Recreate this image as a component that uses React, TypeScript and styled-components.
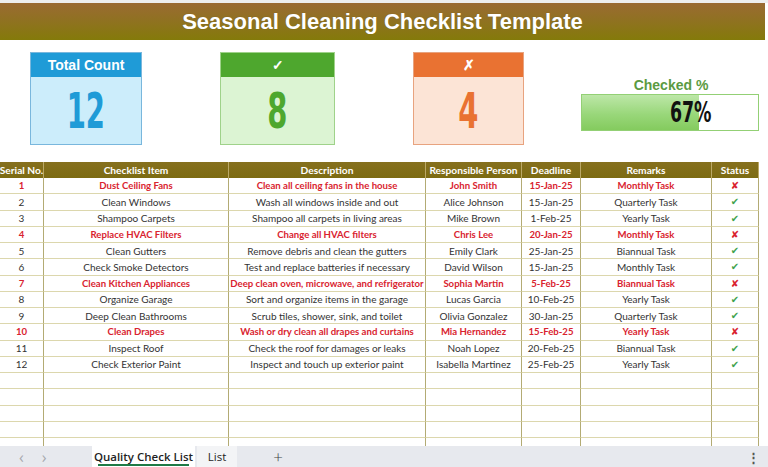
import React from "react";
import styled, { createGlobalStyle } from "styled-components";

const Global = createGlobalStyle`
  html, body { margin: 0; padding: 0; background: #ffffff; }
  body { width: 768px; height: 467px; overflow: hidden; font-family: "Liberation Sans", Arial, sans-serif; }
  * { box-sizing: border-box; }
`;

const Page = styled.div`
  width: 768px;
  height: 467px;
  display: flex;
  flex-direction: column;
  background: #ffffff;
  border-top: 3px solid #eeeeee;
`;

const TitleBar = styled.div`
  width: 765px;
  height: 37px;
  flex: none;
  display: flex;
  align-items: center;
  justify-content: center;
  background: linear-gradient(to bottom, #9a6a32 0%, #8f7220 50%, #847a0a 100%);
  color: #ffffff;
  font-family: "Liberation Sans", Arial, sans-serif;
  font-weight: bold;
  font-size: 22px;
  text-shadow: 0 0 1px rgba(0,0,0,0.2);
`;

const Dashboard = styled.div`
  height: 122px;
  flex: none;
  display: flex;
  align-items: flex-start;
  padding: 12px 0 0 30px;
  gap: 78px;
`;

type Tone = { head: string; body: string; border: string };

const Card = styled.div<{ $w: number; $tone: Tone }>`
  width: ${(p) => p.$w}px;
  height: 93px;
  display: flex;
  flex-direction: column;
  background: ${(p) => p.$tone.body};
  border: 1px solid ${(p) => p.$tone.border};
`;

const CardHead = styled.div<{ $tone: Tone }>`
  height: 24px;
  flex: none;
  display: flex;
  align-items: center;
  justify-content: center;
  background: ${(p) => p.$tone.head};
  color: #ffffff;
  font-family: "Liberation Sans", Arial, sans-serif;
  font-weight: bold;
  font-size: 14px;
`;

const CardBody = styled.div`
  flex: 1;
  display: flex;
  align-items: center;
  justify-content: center;
`;

const BigNum = styled.span<{ $color: string; $size: number; $sx: number }>`
  display: inline-block;
  color: ${(p) => p.$color};
  font-family: "DejaVu Sans", sans-serif;
  font-weight: bold;
  font-size: ${(p) => p.$size}px;
  line-height: 1;
  transform: scaleX(${(p) => p.$sx});
`;

const CheckedBlock = styled.div`
  margin-left: -21px;
  width: 178px;
  display: flex;
  flex-direction: column;
  align-items: center;
  padding-top: 23px;
`;

const CheckedLabel = styled.div`
  height: 19px;
  display: flex;
  align-items: center;
  padding-left: 2px;
  color: #5b9a42;
  font-family: "Liberation Sans", Arial, sans-serif;
  font-weight: bold;
  font-size: 14px;
`;

const Bar = styled.div`
  position: relative;
  width: 178px;
  height: 37px;
  border: 1px solid #93d075;
  background: #ffffff;
`;

const BarFill = styled.div`
  height: 100%;
  background: linear-gradient(to bottom, #bde7a8 0%, #99d77a 55%, #84cb5e 100%);
`;

const BarText = styled.div`
  position: absolute;
  inset: 0;
  display: flex;
  align-items: center;
  justify-content: center;
  padding-left: 42px;
`;

const TableWrap = styled.div`
  height: 284px;
  flex: none;
  overflow: hidden;
  width: 759px;
`;

const cols = "44px 185px 197px 96px 59px 131px 47px";

const HeadRow = styled.div`
  display: grid;
  grid-template-columns: ${cols};
  height: 16px;
  background: linear-gradient(to bottom, #86701e, #7c6b12);
`;

const HeadCell = styled.div`
  display: flex;
  align-items: center;
  justify-content: center;
  border-right: 1px solid #bba867;
  color: #ffffff;
  font-family: Lato, "Liberation Sans", sans-serif;
  font-weight: bold;
  font-size: 10.2px;
  white-space: nowrap;
  overflow: hidden;
`;

const Row = styled.div`
  display: grid;
  grid-template-columns: ${cols};
  height: 16.25px;
`;

const Cell = styled.div<{ $hot: boolean }>`
  display: flex;
  align-items: center;
  justify-content: center;
  border-right: 1px solid #b3ab74;
  border-bottom: 1px solid #dcd7ad;
  color: ${(p) => (p.$hot ? "#d9232f" : "#333333")};
  font-family: Lato, "Liberation Sans", sans-serif;
  font-weight: ${(p) => (p.$hot ? "bold" : "normal")};
  font-size: ${(p) => (p.$hot ? "9.6px" : "10px")};
  white-space: nowrap;
  overflow: hidden;
`;

const Mark = styled.span<{ $ok: boolean }>`
  color: ${(p) => (p.$ok ? "#3ea24c" : "#d9232f")};
  font-family: "DejaVu Sans", sans-serif;
  font-size: 10px;
  font-weight: bold;
`;

const TabBar = styled.div`
  height: 21px;
  flex: none;
  display: flex;
  align-items: stretch;
  background: #e7e9ee;
  margin-top: auto;
  font-family: "Open Sans", "Noto Sans", sans-serif;
`;

const NavArea = styled.div`
  width: 92px;
  display: flex;
  align-items: center;
  padding-left: 19px;
  gap: 18px;
  color: #a7a9ae;
  font-size: 16px;
`;

const Tab = styled.div<{ $active: boolean; $w: number }>`
  position: relative;
  width: ${(p) => p.$w}px;
  display: flex;
  align-items: center;
  justify-content: center;
  background: ${(p) => (p.$active ? "#ffffff" : "#f3f4f6")};
  color: #1f1f1f;
  font-size: 11.5px;
  font-weight: ${(p) => (p.$active ? 600 : 400)};
  margin-right: 2px;
`;

const TabLine = styled.div`
  position: absolute;
  left: 6px;
  right: 6px;
  bottom: 1px;
  height: 2px;
  background: #1e7a46;
`;

const Plus = styled.div`
  width: 78px;
  display: flex;
  align-items: center;
  justify-content: center;
  color: #444;
  font-size: 17px;
  font-weight: 300;
`;

const Spacer = styled.div`
  flex: 1;
`;

const Dots = styled.div`
  width: 30px;
  display: flex;
  align-items: center;
  justify-content: center;
  color: #555;
  font-size: 13px;
  font-weight: bold;
`;

const blue: Tone = { head: "#1f9bd7", body: "#ccedfb", border: "#79b7dd" };
const green: Tone = { head: "#4ea72e", body: "#dcf4d3", border: "#9fd28a" };
const orange: Tone = { head: "#e97232", body: "#fce4d6", border: "#e8a37f" };

type Item = [string, string, string, string, string, boolean];

const items: Item[] = [
  ["Dust Ceiling Fans", "Clean all ceiling fans in the house", "John Smith", "15-Jan-25", "Monthly Task", false],
  ["Clean Windows", "Wash all windows inside and out", "Alice Johnson", "15-Jan-25", "Quarterly Task", true],
  ["Shampoo Carpets", "Shampoo all carpets in living areas", "Mike Brown", "1-Feb-25", "Yearly Task", true],
  ["Replace HVAC Filters", "Change all HVAC filters", "Chris Lee", "20-Jan-25", "Monthly Task", false],
  ["Clean Gutters", "Remove debris and clean the gutters", "Emily Clark", "25-Jan-25", "Biannual Task", true],
  ["Check Smoke Detectors", "Test and replace batteries if necessary", "David Wilson", "15-Jan-25", "Monthly Task", true],
  ["Clean Kitchen Appliances", "Deep clean oven, microwave, and refrigerator", "Sophia Martin", "5-Feb-25", "Biannual Task", false],
  ["Organize Garage", "Sort and organize items in the garage", "Lucas Garcia", "10-Feb-25", "Yearly Task", true],
  ["Deep Clean Bathrooms", "Scrub tiles, shower, sink, and toilet", "Olivia Gonzalez", "30-Jan-25", "Quarterly Task", true],
  ["Clean Drapes", "Wash or dry clean all drapes and curtains", "Mia Hernandez", "15-Feb-25", "Yearly Task", false],
  ["Inspect Roof", "Check the roof for damages or leaks", "Noah Lopez", "20-Feb-25", "Biannual Task", true],
  ["Check Exterior Paint", "Inspect and touch up exterior paint", "Isabella Martinez", "25-Feb-25", "Yearly Task", true],
];

const headers = ["Serial No.", "Checklist Item", "Description", "Responsible Person", "Deadline", "Remarks", "Status"];

export default function App() {
  const done = items.filter((i) => i[5]).length;
  const pct = Math.round((done / items.length) * 100);
  return (
    <>
      <Global />
      <Page>
        <TitleBar>Seasonal Cleaning Checklist Template</TitleBar>
        <Dashboard>
          <Card $w={112} $tone={blue}>
            <CardHead $tone={blue}>Total Count</CardHead>
            <CardBody>
              <BigNum $color="#1f9bd7" $size={50} $sx={0.55}>{items.length}</BigNum>
            </CardBody>
          </Card>
          <Card $w={115} $tone={green}>
            <CardHead $tone={green}>✓</CardHead>
            <CardBody>
              <BigNum $color="#4ea72e" $size={50} $sx={0.58}>{done}</BigNum>
            </CardBody>
          </Card>
          <Card $w={111} $tone={orange}>
            <CardHead $tone={orange}>✗</CardHead>
            <CardBody>
              <BigNum $color="#e97232" $size={50} $sx={0.58}>{items.length - done}</BigNum>
            </CardBody>
          </Card>
          <CheckedBlock>
            <CheckedLabel>Checked %</CheckedLabel>
            <Bar>
              <BarFill style={{ width: `${(done / items.length) * 100}%` }} />
              <BarText>
                <BigNum $color="#111111" $size={29} $sx={0.6}>{pct}%</BigNum>
              </BarText>
            </Bar>
          </CheckedBlock>
        </Dashboard>
        <TableWrap>
          <HeadRow>
            {headers.map((h) => (
              <HeadCell key={h}>{h}</HeadCell>
            ))}
          </HeadRow>
          {items.map((it, i) => {
            const hot = !it[5];
            return (
              <Row key={i}>
                <Cell $hot={hot}>{i + 1}</Cell>
                <Cell $hot={hot}>{it[0]}</Cell>
                <Cell $hot={hot}>{it[1]}</Cell>
                <Cell $hot={hot}>{it[2]}</Cell>
                <Cell $hot={hot}>{it[3]}</Cell>
                <Cell $hot={hot}>{it[4]}</Cell>
                <Cell $hot={hot}>
                  <Mark $ok={it[5]}>{it[5] ? "✔" : "✘"}</Mark>
                </Cell>
              </Row>
            );
          })}
          {[0, 1, 2, 3, 4].map((r) => (
            <Row key={`e${r}`}>
              {headers.map((h) => (
                <Cell key={h} $hot={false} />
              ))}
            </Row>
          ))}
        </TableWrap>
        <TabBar>
          <NavArea>
            <span>‹</span>
            <span>›</span>
          </NavArea>
          <Tab $active $w={103}>
            Quality Check List
            <TabLine />
          </Tab>
          <Tab $active={false} $w={40}>List</Tab>
          <Plus>+</Plus>
          <Spacer />
          <Dots>⋮</Dots>
        </TabBar>
      </Page>
    </>
  );
}
